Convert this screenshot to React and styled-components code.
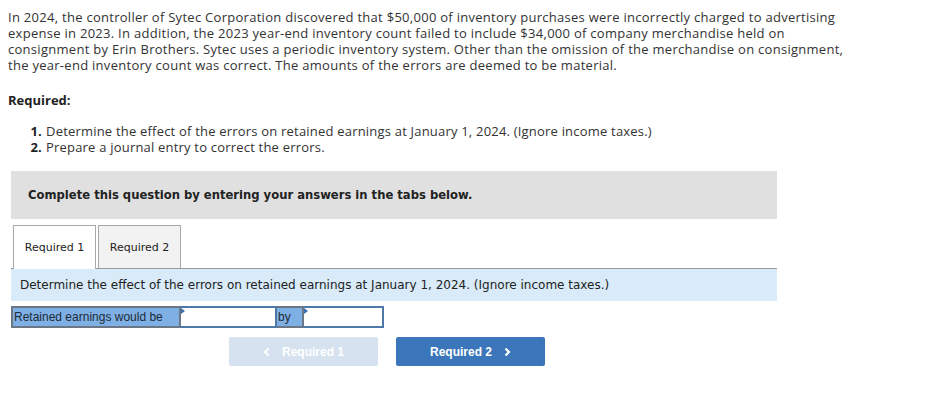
import { createGlobalStyle } from "styled-components"
import styled from "styled-components"

const GlobalStyle = createGlobalStyle`
    body {
        margin: 0;
        background: #ffffff;
    }
`

const Page = styled.div`
    width: 946px;
    height: 401px;
    padding: 9px 8px 0 8px;
    box-sizing: border-box;
    font-family: "Open Sans", Lato, sans-serif;
    color: #333333;
`

const Intro = styled.p`
    margin: 0;
    font-size: 13px;
    line-height: 16px;
    letter-spacing: 0.28px;
    white-space: nowrap;
`

const Heading = styled.div`
    margin-top: 19px;
    font-size: 13px;
    line-height: 16px;
    font-weight: 700;
    color: #222222;
`

const Steps = styled.div`
    display: grid;
    grid-template-columns: 34px auto;
    column-gap: 4px;
    margin-top: 15px;
    font-size: 13px;
    line-height: 16px;
    letter-spacing: 0.2px;
`

const Num = styled.span`
    text-align: right;
    font-weight: 700;
    color: #222222;
`

const Question = styled.div`
    margin: 16px 0 0 3px;
    width: 766px;
    font-family: Verdana, "DejaVu Sans", sans-serif;
`

const Banner = styled.div`
    height: 48px;
    background: #e0e0e0;
    display: flex;
    align-items: center;
    padding-left: 17px;
    font-size: 11.6px;
    font-weight: 700;
    color: #222222;
`

const TabBar = styled.div`
    display: flex;
    gap: 2px;
    margin-top: 6px;
    padding-left: 2px;
    border-bottom: 1px solid #9a9a9a;
`

const Tab = styled.div`
    width: 83px;
    box-sizing: border-box;
    border: 1px solid #a8a8a8;
    border-bottom: none;
    background: ${props => (props.active ? "#ffffff" : "#f2f2f2")};
    margin-bottom: ${props => (props.active ? "-1px" : "0")};
    height: ${props => (props.active ? "44px" : "43px")};
    display: flex;
    align-items: center;
    justify-content: center;
    font-size: 11px;
    color: #222222;
`

const Prompt = styled.div`
    height: 32px;
    background: #d9ebf9;
    display: flex;
    align-items: center;
    padding-left: 9px;
    font-size: 12px;
    color: #222222;
`

const AnswerRow = styled.div`
    display: flex;
    margin-top: 5px;
    height: 22px;
    font-family: Arial, "Liberation Sans", sans-serif;
    font-size: 12px;
`

const Cell = styled.div`
    box-sizing: border-box;
    width: ${props => props.w}px;
    border: 2px solid #6b7785;
    margin-left: -2px;
    background: #7eb0e5;
    color: #1f2a36;
    display: flex;
    align-items: center;
    padding-left: 1px;
    &:first-child {
        margin-left: 0;
    }
`

const Input = styled.div`
    position: relative;
    box-sizing: border-box;
    width: ${props => props.w}px;
    border: 2px solid #4f78a8;
    border-left-color: #6b7785;
    margin-left: -2px;
    background: #ffffff;
    &::before {
        content: "";
        position: absolute;
        top: 0;
        left: 0;
        border-top: 3px solid transparent;
        border-bottom: 3px solid transparent;
        border-left: 4px solid #3a6fb0;
    }
`

const Nav = styled.div`
    display: flex;
    gap: 18px;
    margin: 9px 0 0 218px;
`

const NavButton = styled.div`
    width: 149px;
    height: 29px;
    border-radius: 2px;
    background: ${props => (props.disabled ? "#d6e2ef" : "#3a76b9")};
    color: #ffffff;
    display: flex;
    align-items: center;
    justify-content: center;
    gap: 12px;
    font-family: Arial, "Liberation Sans", sans-serif;
    font-size: 12px;
    font-weight: 700;
`

const Chevron = ({ dir }) => (
    <svg width="7" height="10" viewBox="0 0 7 10">
        <path
            d={dir === "left" ? "M5.5 1.5 L2 5 L5.5 8.5" : "M1.5 1.5 L5 5 L1.5 8.5"}
            fill="none"
            stroke="#ffffff"
            strokeWidth="2.2"
        />
    </svg>
)

export default function App() {
    return (
        <Page>
            <GlobalStyle />
            <Intro>
                In 2024, the controller of Sytec Corporation discovered that $50,000 of inventory purchases were incorrectly charged to advertising<br />
                expense in 2023. In addition, the 2023 year-end inventory count failed to include $34,000 of company merchandise held on<br />
                consignment by Erin Brothers. Sytec uses a periodic inventory system. Other than the omission of the merchandise on consignment,<br />
                the year-end inventory count was correct. The amounts of the errors are deemed to be material.
            </Intro>
            <Heading>Required:</Heading>
            <Steps>
                <Num>1.</Num>
                <span>Determine the effect of the errors on retained earnings at January 1, 2024. (Ignore income taxes.)</span>
                <Num>2.</Num>
                <span>Prepare a journal entry to correct the errors.</span>
            </Steps>
            <Question>
                <Banner>Complete this question by entering your answers in the tabs below.</Banner>
                <TabBar>
                    <Tab active>Required 1</Tab>
                    <Tab>Required 2</Tab>
                </TabBar>
                <Prompt>Determine the effect of the errors on retained earnings at January 1, 2024. (Ignore income taxes.)</Prompt>
                <AnswerRow>
                    <Cell w={170}>Retained earnings would be</Cell>
                    <Input w={98} />
                    <Cell w={29}>by</Cell>
                    <Input w={82} />
                </AnswerRow>
                <Nav>
                    <NavButton disabled>
                        <Chevron dir="left" />
                        Required 1
                    </NavButton>
                    <NavButton>
                        Required 2
                        <Chevron dir="right" />
                    </NavButton>
                </Nav>
            </Question>
        </Page>
    )
}
